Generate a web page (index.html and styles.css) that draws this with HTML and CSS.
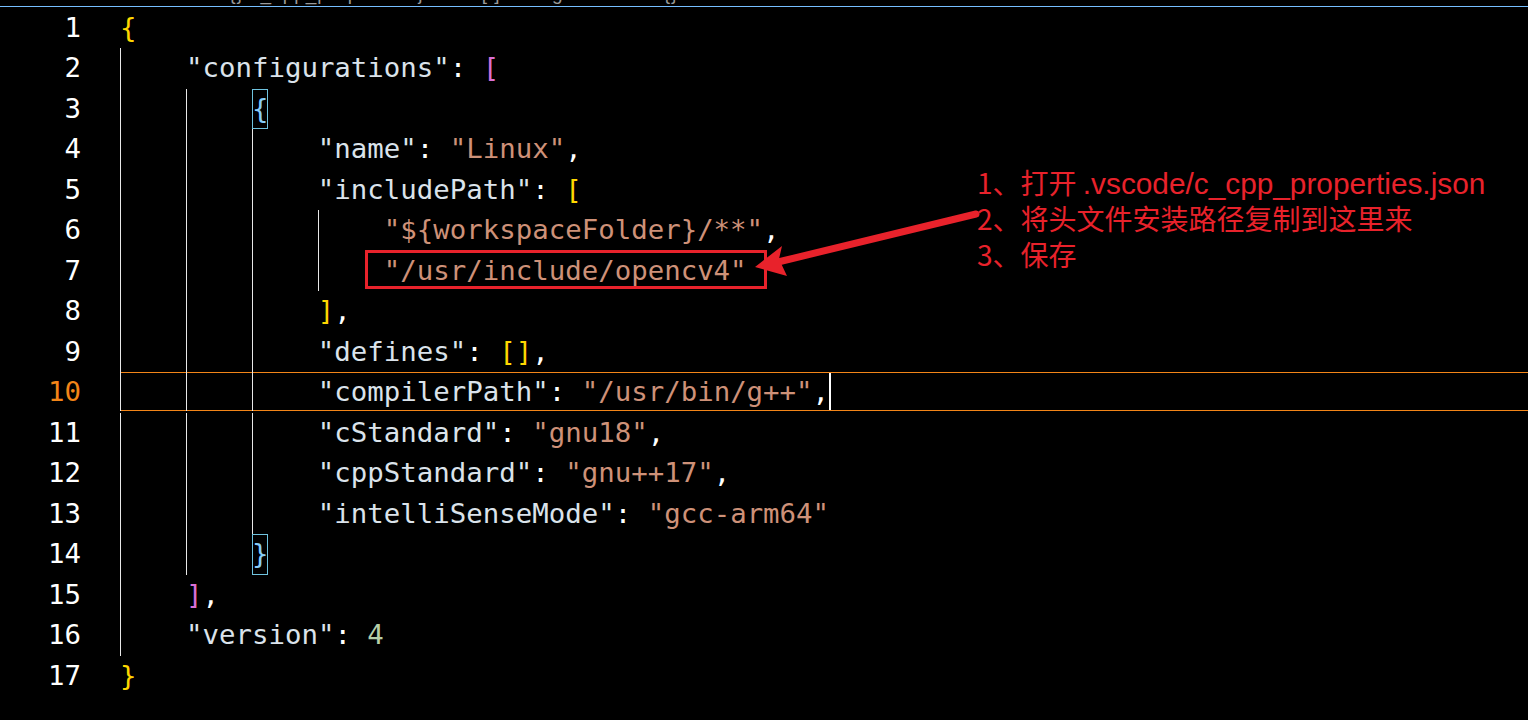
FILE: index.html
```html
<!DOCTYPE html>
<html lang="zh-CN">
<head>
<meta charset="utf-8">
<title>c_cpp_properties.json</title>
<link rel="stylesheet" href="styles.css">
</head>
<body>
<div class="page">
  <div class="crumbs"><span class="crumb-text">.vscode &gt; {} c_cpp_properties.json &gt; [ ] configurations &gt; {} 0</span></div>
  <div class="editor">
    <div class="row"><span class="ln">1</span><div class="code"><span class="b1">{</span></div></div>
    <div class="row"><span class="ln">2</span><div class="code"><span class="g"></span><span class="k">"configurations"</span><span class="p">: </span><span class="b2">[</span></div></div>
    <div class="row"><span class="ln">3</span><div class="code"><span class="g"></span><span class="g"></span><span class="b3 match">{</span></div></div>
    <div class="row"><span class="ln">4</span><div class="code"><span class="g"></span><span class="g"></span><span class="g"></span><span class="k">"name"</span><span class="p">: </span><span class="s">"Linux"</span><span class="p">,</span></div></div>
    <div class="row"><span class="ln">5</span><div class="code"><span class="g"></span><span class="g"></span><span class="g"></span><span class="k">"includePath"</span><span class="p">: </span><span class="b1">[</span></div></div>
    <div class="row"><span class="ln">6</span><div class="code"><span class="g"></span><span class="g"></span><span class="g"></span><span class="g"></span><span class="s">"${workspaceFolder}/**"</span><span class="p">,</span></div></div>
    <div class="row"><span class="ln">7</span><div class="code"><span class="g"></span><span class="g"></span><span class="g"></span><span class="g"></span><span class="s boxed">"/usr/include/opencv4"</span></div></div>
    <div class="row"><span class="ln">8</span><div class="code"><span class="g"></span><span class="g"></span><span class="g"></span><span class="b1">]</span><span class="p">,</span></div></div>
    <div class="row"><span class="ln">9</span><div class="code"><span class="g"></span><span class="g"></span><span class="g"></span><span class="k">"defines"</span><span class="p">: </span><span class="b1">[]</span><span class="p">,</span></div></div>
    <div class="row current"><span class="ln">10</span><div class="code"><span class="g"></span><span class="g"></span><span class="g"></span><span class="k">"compilerPath"</span><span class="p">: </span><span class="s">"/usr/bin/g++"</span><span class="p">,</span><span class="cursor"></span></div></div>
    <div class="row"><span class="ln">11</span><div class="code"><span class="g"></span><span class="g"></span><span class="g"></span><span class="k">"cStandard"</span><span class="p">: </span><span class="s">"gnu18"</span><span class="p">,</span></div></div>
    <div class="row"><span class="ln">12</span><div class="code"><span class="g"></span><span class="g"></span><span class="g"></span><span class="k">"cppStandard"</span><span class="p">: </span><span class="s">"gnu++17"</span><span class="p">,</span></div></div>
    <div class="row"><span class="ln">13</span><div class="code"><span class="g"></span><span class="g"></span><span class="g"></span><span class="k">"intelliSenseMode"</span><span class="p">: </span><span class="s">"gcc-arm64"</span></div></div>
    <div class="row"><span class="ln">14</span><div class="code"><span class="g"></span><span class="g"></span><span class="b3 match">}</span></div></div>
    <div class="row"><span class="ln">15</span><div class="code"><span class="g"></span><span class="b2">]</span><span class="p">,</span></div></div>
    <div class="row"><span class="ln">16</span><div class="code"><span class="g"></span><span class="k">"version"</span><span class="p">: </span><span class="n">4</span></div></div>
    <div class="row"><span class="ln">17</span><div class="code"><span class="b1">}</span></div></div>
  </div>

  <div class="note">
    <div class="note-line">1、打开 <span class="lat">.vscode/c_cpp_properties.json</span></div>
    <div class="note-line">2、将头文件安装路径复制到这里来</div>
    <div class="note-line">3、保存</div>
  </div>

  <svg class="arrow" width="1528" height="720" viewBox="0 0 1528 720" aria-hidden="true">
    <line x1="976" y1="214" x2="778" y2="262" stroke="#e8222b" stroke-width="7" stroke-linecap="round"/>
    <polygon points="755,267 782,246 779,259 787,276" fill="#e8222b"/>
  </svg>
</div>
</body>
</html>
```
FILE: styles.css
```css
html, body {
  margin: 0;
  padding: 0;
  background: #000;
}

.page {
  position: relative;
  width: 1528px;
  height: 720px;
  overflow: hidden;
  background: #000;
}

.crumbs {
  height: 6px;
  overflow: hidden;
  border-bottom: 1px solid #75beff;
  padding-left: 132px;
}

.crumb-text {
  display: block;
  margin-top: -16px;
  font-family: "Liberation Sans", Arial, sans-serif;
  font-size: 19px;
  line-height: 20px;
  letter-spacing: 1px;
  color: #9a9a9a;
  white-space: pre;
}

.editor {
  padding-top: 0.5px;
  font-family: "DejaVu Sans Mono", "Liberation Mono", monospace;
  font-size: 27.4px;
}

.row {
  display: flex;
  height: 40.5px;
  line-height: 40.5px;
}

.ln {
  flex: none;
  width: 81px;
  margin-right: 39px;
  text-align: right;
  color: #ffffff;
}

.current .ln {
  color: #f38518;
}

.code {
  flex: 1;
  display: flex;
  white-space: pre;
  color: #ffffff;
}

.current .code {
  height: 39px;
  box-shadow: inset 0 1px 0 #f38518, inset 0 -1px 0 #f38518;
}

.g {
  flex: none;
  width: 4ch;
  box-shadow: inset 1px 0 0 #e8e8e8;
}

.k { color: #dbe3eb; }
.s { color: #ce9178; }
.n { color: #b5cea8; }
.p { color: #ffffff; }
.b1 { color: #ffd700; }
.b2 { color: #da70d6; }
.b3 { color: #87cefa; }

.match {
  box-shadow: inset 0 0 0 1px #6fc3df;
}

.boxed {
  position: relative;
}

.boxed::after {
  content: "";
  position: absolute;
  left: -19px;
  right: -20px;
  top: -1px;
  bottom: 2px;
  border: 3px solid #e8222b;
}

.cursor {
  flex: none;
  align-self: center;
  width: 2px;
  height: 37px;
  background: #ffffff;
}

.note {
  position: absolute;
  left: 977px;
  top: 164px;
  font-family: "Noto Sans CJK SC", "Noto Sans", sans-serif;
  font-size: 28px;
  color: #e8222b;
  white-space: nowrap;
}

.note-line {
  height: 36px;
  line-height: 36px;
  overflow: visible;
}

.lat {
  font-family: "Liberation Sans", Arial, sans-serif;
  font-size: 29.8px;
  line-height: 1;
}

.arrow {
  position: absolute;
  left: 0;
  top: 0;
  pointer-events: none;
}
```
